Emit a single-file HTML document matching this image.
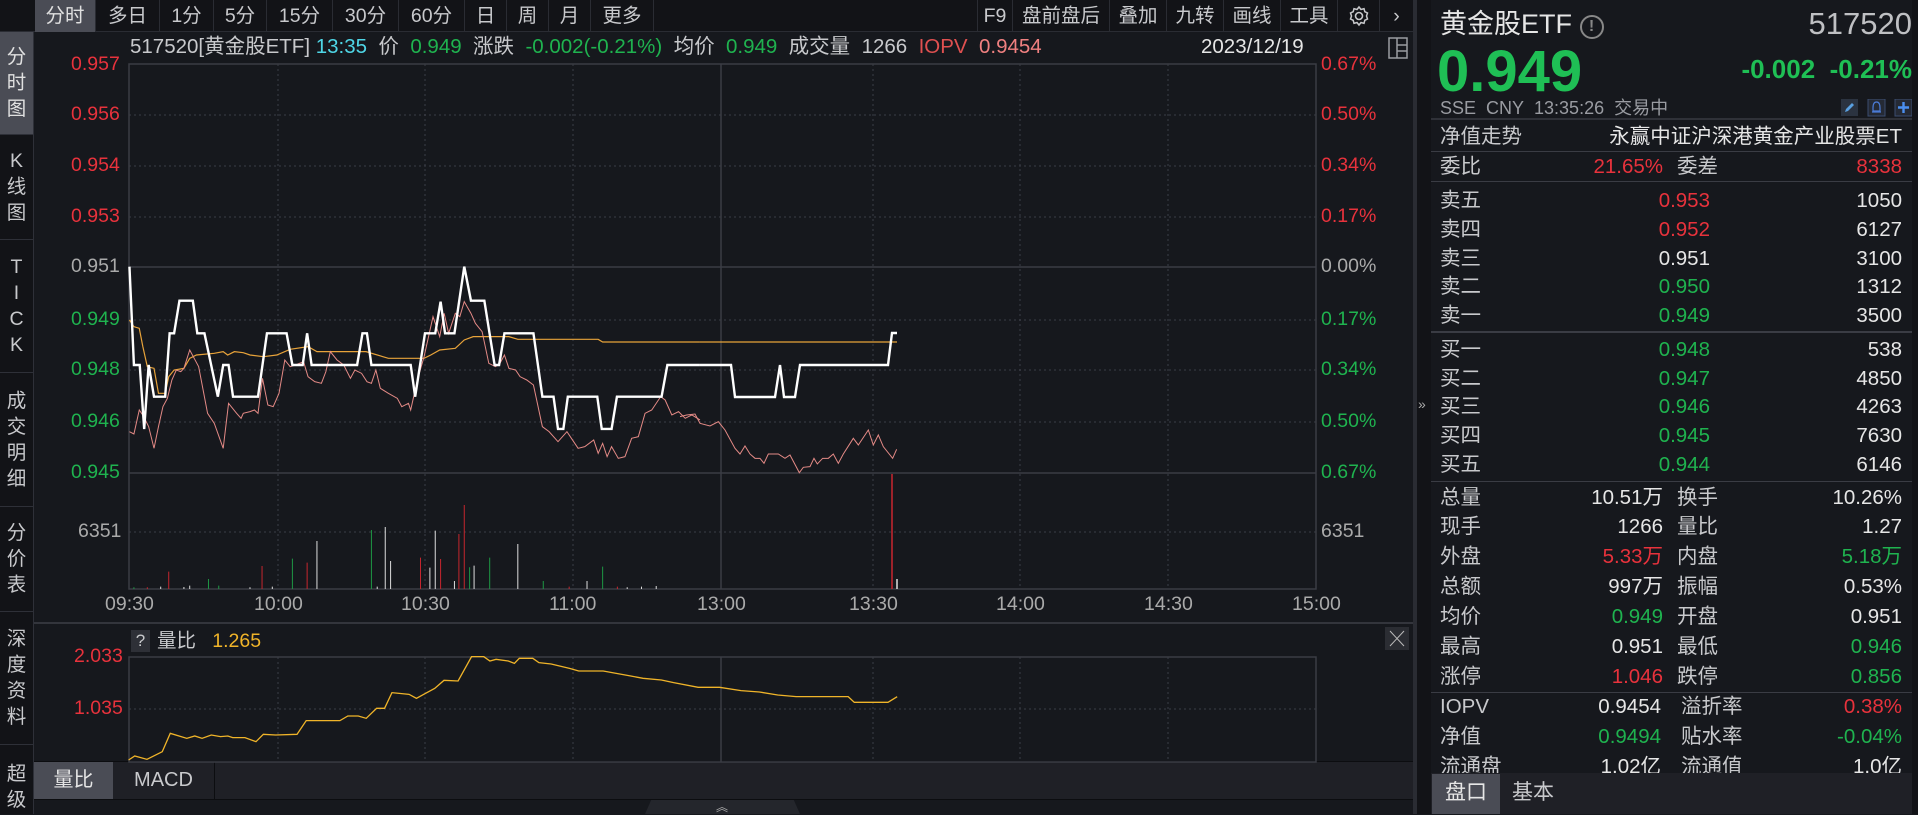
<!DOCTYPE html>
<html><head><meta charset="utf-8"><style>
*{margin:0;padding:0;box-sizing:border-box}
body{width:1918px;height:814px;background:#16181d;overflow:hidden;position:relative;font-family:"Liberation Sans","Noto Sans CJK SC",sans-serif;color:#c8c9cc}
.a{position:absolute;white-space:nowrap}
.ax{font-size:19.5px}
.tab{position:absolute;top:0;height:32px;line-height:32px;font-size:19.5px;text-align:center;color:#c8c9cc;border-right:1px solid #2a2c33}
.side{position:absolute;left:0;width:33px;font-size:19.5px;text-align:center;line-height:26px;color:#c8c9cc;border-bottom:1px solid #2e3038;display:flex;flex-direction:column;justify-content:center}
.r{color:#e8323c}.g{color:#1fb34f}.w{color:#e6e6e6}
.row{position:absolute;left:1440px;width:462px;height:29px;font-size:20.5px;line-height:29px}
.row span{position:absolute}
.hl{position:absolute;height:1px;background:#3a3c44}
</style></head><body>
<div class="a" style="left:0;top:0;width:1413px;height:32px;background:#121317;border-bottom:1px solid #2a2c33"></div>
<div class="tab" style="left:35px;width:61px;background:#4a4c55;color:#e0e0e0">分时</div>
<div class="tab" style="left:96px;width:64px">多日</div>
<div class="tab" style="left:160px;width:54px">1分</div>
<div class="tab" style="left:214px;width:53px">5分</div>
<div class="tab" style="left:267px;width:66px">15分</div>
<div class="tab" style="left:333px;width:66px">30分</div>
<div class="tab" style="left:399px;width:66px">60分</div>
<div class="tab" style="left:465px;width:42px">日</div>
<div class="tab" style="left:507px;width:42px">周</div>
<div class="tab" style="left:549px;width:42px">月</div>
<div class="tab" style="left:591px;width:63px">更多</div>
<div class="tab" style="left:977px;width:36px;border-left:1px solid #2a2c33">F9</div>
<div class="tab" style="left:1013px;width:97px">盘前盘后</div>
<div class="tab" style="left:1110px;width:57px">叠加</div>
<div class="tab" style="left:1167px;width:57px">九转</div>
<div class="tab" style="left:1224px;width:57px">画线</div>
<div class="tab" style="left:1281px;width:57px">工具</div>
<div class="tab" style="left:1338px;width:42px"><svg width="22" height="22" viewBox="0 0 22 22" style="margin-top:5px"><circle cx="11" cy="11" r="3.5" fill="none" stroke="#c8c9cc" stroke-width="1.6"/><path d="M11 2l2 2.5 3-.8.8 3 2.7 1.3-1 3 1 3-2.7 1.3-.8 3-3-.8L11 20l-2-2.5-3 .8-.8-3L2.5 14l1-3-1-3 2.7-1.3.8-3 3 .8z" fill="none" stroke="#c8c9cc" stroke-width="1.5"/></svg></div>
<div class="tab" style="left:1380px;width:33px;border:none">›</div>
<div class="a" style="left:0;top:32px;width:34px;height:782px;background:#121317;border-right:1px solid #2e3038"></div>
<div class="side" style="top:32px;height:103px;background:#4a4c55;color:#e0e0e0">分<br>时<br>图</div>
<div class="side" style="top:135px;height:105px">K<br>线<br>图</div>
<div class="side" style="top:240px;height:133px">T<br>I<br>C<br>K</div>
<div class="side" style="top:373px;height:134px">成<br>交<br>明<br>细</div>
<div class="side" style="top:507px;height:105px">分<br>价<br>表</div>
<div class="side" style="top:612px;height:133px">深<br>度<br>资<br>料</div>
<div class="side" style="top:745px;height:69px;justify-content:flex-start;padding-top:16px;border:none">超<br>级</div>
<div class="a" style="left:130px;top:35px;font-size:20.5px;line-height:24px">517520[黄金股ETF] <span style="color:#4fd6e6">13:35</span>&nbsp; 价&nbsp; <span class="g">0.949</span>&nbsp; 涨跌&nbsp; <span class="g">-0.002(-0.21%)</span>&nbsp; 均价&nbsp; <span class="g">0.949</span>&nbsp; 成交量&nbsp; 1266&nbsp; <span style="color:#e05050">IOPV</span>&nbsp; <span style="color:#f08080">0.9454</span></div>
<div class="a" style="left:1201px;top:35px;font-size:20.5px;line-height:24px;color:#e6e6e6">2023/12/19</div>
<svg class="a" style="left:1388px;top:37px" width="20" height="22"><rect x="1" y="1" width="18" height="20" fill="none" stroke="#9a9ca2" stroke-width="1.5"/><path d="M9 1v20M9 8h10M9 14h10" stroke="#9a9ca2" stroke-width="1.5"/></svg>
<div class="a r ax" style="left:71px;top:53px">0.957</div>
<div class="a r ax" style="left:71px;top:103px">0.956</div>
<div class="a r ax" style="left:71px;top:154px">0.954</div>
<div class="a r ax" style="left:71px;top:205px">0.953</div>
<div class="a ax" style="left:71px;top:255px;color:#aaa">0.951</div>
<div class="a g ax" style="left:71px;top:308px">0.949</div>
<div class="a g ax" style="left:71px;top:358px">0.948</div>
<div class="a g ax" style="left:71px;top:410px">0.946</div>
<div class="a g ax" style="left:71px;top:461px">0.945</div>
<div class="a ax" style="left:78px;top:520px;color:#aaa">6351</div>
<div class="a r ax" style="left:1321px;top:53px">0.67%</div>
<div class="a r ax" style="left:1321px;top:103px">0.50%</div>
<div class="a r ax" style="left:1321px;top:154px">0.34%</div>
<div class="a r ax" style="left:1321px;top:205px">0.17%</div>
<div class="a ax" style="left:1321px;top:255px;color:#aaa">0.00%</div>
<div class="a g ax" style="left:1321px;top:308px">0.17%</div>
<div class="a g ax" style="left:1321px;top:358px">0.34%</div>
<div class="a g ax" style="left:1321px;top:410px">0.50%</div>
<div class="a g ax" style="left:1321px;top:461px">0.67%</div>
<div class="a ax" style="left:1321px;top:520px;color:#aaa">6351</div>
<div class="a ax" style="left:105px;top:593px;color:#aaa">09:30</div>
<div class="a ax" style="left:254px;top:593px;color:#aaa">10:00</div>
<div class="a ax" style="left:401px;top:593px;color:#aaa">10:30</div>
<div class="a ax" style="left:549px;top:593px;color:#aaa">11:00</div>
<div class="a ax" style="left:697px;top:593px;color:#aaa">13:00</div>
<div class="a ax" style="left:849px;top:593px;color:#aaa">13:30</div>
<div class="a ax" style="left:996px;top:593px;color:#aaa">14:00</div>
<div class="a ax" style="left:1144px;top:593px;color:#aaa">14:30</div>
<div class="a ax" style="left:1292px;top:593px;color:#aaa">15:00</div>
<div class="a" style="left:34px;top:622px;width:1379px;height:2px;background:#33353c"></div>
<div class="a" style="left:131px;top:630px;width:19px;height:22px;background:#2e3037;font-size:17px;text-align:center;line-height:22px">?</div>
<div class="a" style="left:157px;top:629px;font-size:19.5px;line-height:24px">量比&nbsp;&nbsp; <span style="color:#f0b429">1.265</span></div>
<div class="a r ax" style="left:74px;top:645px">2.033</div>
<div class="a r ax" style="left:74px;top:697px">1.035</div>
<svg class="a" style="left:1385px;top:627px" width="24" height="23"><rect width="24" height="23" fill="#2b2d33"/><path d="M5 4l14 15M19 4L5 19" stroke="#bbb" stroke-width="1"/></svg>
<div class="a" style="left:34px;top:761px;width:1379px;height:39px;background:#1f2026;border-top:1px solid #0c0d10;border-bottom:1px solid #0c0d10"></div>
<div class="a" style="left:34px;top:762px;width:79px;height:37px;background:#4a4c55;color:#e6e6e6;font-size:20px;text-align:center;line-height:37px">量比</div>
<div class="a" style="left:113px;top:762px;width:102px;height:37px;font-size:20px;text-align:center;line-height:37px;border-right:1px solid #0c0d10">MACD</div>
<div class="a" style="left:645px;top:800px;width:155px;height:14px;background:#24262c;clip-path:polygon(4% 0,96% 0,100% 100%,0 100%)"></div>
<div class="a" style="left:716px;top:798px;font-size:12px;color:#aaa">︽</div>
<svg class="a" style="left:0;top:0" width="1413" height="814">
<g stroke="#3b3e46" stroke-width="1" stroke-dasharray="2,3">
<path d="M129 115H1316M129 166H1316M129 217H1316M129 320H1316M129 370H1316M129 422H1316M129 532H1316M129 709H1316"/>
<path d="M278 64V589M425 64V589M573 64V589M873 64V589M1020 64V589M1168 64V589M278 657V762M425 657V762M573 657V762M873 657V762M1020 657V762M1168 657V762"/>
</g>
<g stroke="#3a3c44" stroke-width="1.5" fill="none">
<rect x="129" y="64" width="1187" height="525"/>
<path d="M129 267H1316M129 473H1316M721 64V589"/>
<rect x="129" y="657" width="1187" height="105"/>
<path d="M721 657V762"/>
</g>
<g transform="translate(0,280) scale(0.4464,0.3333)" stroke-width="2.2" vector-effect="non-scaling-stroke">
<g stroke="#c8262e"><path d="M378 927V875M587 927V858M688 927V848M942 927V833M987 927V837M1028 927V762M1040 927V675M1383 927V920M330 927V922M1275 927V920"/></g>
<g stroke="#1e9a45"><path d="M467 927V897M655 927V836M832 927V750M1052 927V862M1097 927V833M1217 927V903M1350 927V860M300 927V922M490 927V917"/></g>
<g stroke="#e0e0e0"><path d="M710 927V783M863 927V741M875 927V843M963 927V863M975 927V752M1018 927V903M1062 927V857M1160 927V792M1315 927V903M425 927V917M610 927V920M1470 927V918M1437 927V920M1405 927V922M845 927V920M560 927V922M412 927V921M360 927V920"/></g>
</g>
<path d="M892 589V474" stroke="#c8262e" stroke-width="1.5"/>
<path d="M897 589V579" stroke="#e0e0e0" stroke-width="1.5"/>
<polyline transform="translate(0,280) scale(0.4464,0.3333)" vector-effect="non-scaling-stroke" fill="none" stroke="#e8a33a" stroke-width="1.2" points="290,120 300,140 312,145 320,200 330,260 345,265 355,340 370,340 378,290 390,270 412,265 425,235 440,225 480,220 500,215 510,225 525,215 545,218 560,225 590,230 620,225 650,208 690,200 710,215 820,215 870,235 950,235 965,225 985,210 1020,205 1040,180 1060,170 1140,170 1160,178 1340,178 1350,186 1568,186"/>
<path d="M700 342H897" stroke="#e8a33a" stroke-width="1.2"/>
<polyline transform="translate(0,280) scale(0.4464,0.3333)" vector-effect="non-scaling-stroke" fill="none" stroke="#e48a86" stroke-width="1" points="290,455 300,462 312,390 322,410 333,440 345,505 355,440 365,380 375,355 385,300 395,270 405,275 412,265 425,210 435,235 445,260 455,330 465,400 480,430 500,505 512,370 530,400 540,415 545,400 560,395 570,390 578,400 588,295 600,375 612,380 625,340 638,240 650,260 662,255 680,245 690,290 705,305 720,310 730,275 740,215 755,240 770,255 785,295 795,270 810,280 822,305 832,310 842,270 852,325 870,340 890,355 900,380 915,370 920,390 935,300 950,230 970,110 985,170 995,100 1005,160 1020,100 1030,110 1040,65 1055,100 1065,130 1080,155 1095,250 1110,260 1120,250 1130,225 1140,265 1155,270 1165,290 1180,300 1195,315 1215,440 1230,455 1250,485 1270,455 1280,475 1295,505 1310,500 1330,480 1340,520 1350,490 1360,530 1370,500 1385,535 1400,530 1415,475 1430,470 1445,400 1460,390 1480,350 1490,360 1505,405 1520,395 1535,415 1550,405 1568,420"/>
<polyline transform="translate(680,250) scale(0.3333)" vector-effect="non-scaling-stroke" fill="none" stroke="#e48a86" stroke-width="1" points="0,500 20,495 45,492 60,520 90,528 115,515 135,540 165,595 180,612 195,588 210,612 225,625 240,625 252,640 265,612 295,612 315,625 330,615 358,668 370,652 390,650 402,625 412,642 428,625 445,625 460,612 475,640 490,612 520,565 535,585 565,540 580,585 595,555 610,590 638,625 650,598"/>
<polyline transform="translate(0,280) scale(0.4464,0.3333)" vector-effect="non-scaling-stroke" fill="none" stroke="#ffffff" stroke-width="2.4" points="290,-40 300,255 313,255 323,447 333,255 345,350 370,350 380,160 390,160 402,62 432,62 442,160 458,160 488,350 500,255 512,255 522,350 578,350 598,160 642,160 655,255 678,255 688,160 698,255 800,255 812,160 822,160 832,255 920,255 930,350 952,160 975,160 987,65 997,160 1018,160 1040,-40 1055,62 1085,62 1108,255 1118,255 1130,160 1195,160 1215,350 1240,350 1250,447 1262,447 1272,350 1338,350 1348,447 1370,447 1382,350 1482,350 1495,255 1568,255"/>
<polyline fill="none" stroke="#ffffff" stroke-width="2.4" points="700,365 731,365 735,397 775,397 780,365 784,397 795,397 800,365 888,365 892,333 897,333"/>
<polyline transform="translate(0,600) scale(0.6124,0.3333)" vector-effect="non-scaling-stroke" fill="none" stroke="#f0b429" stroke-width="1.3" points="210,480 220,468 240,478 265,455 278,400 305,415 318,408 330,415 345,405 360,410 372,408 380,413 400,413 418,425 430,403 450,405 485,403 500,362 555,362 568,348 585,348 598,355 615,325 628,325 640,278 668,283 680,295 692,283 710,265 725,241 748,243 770,170 790,170 800,183 810,178 830,183 840,190 848,175 870,175 880,188 900,192 930,205 945,213 985,213 1030,228 1050,235 1080,240 1100,248 1140,262 1175,262 1210,272 1240,276 1270,285 1300,290 1385,290 1395,307 1450,307 1465,290"/>
</svg>
<div class="a" style="left:1413px;top:0;width:4px;height:814px;background:#2a2c33"></div>
<div class="a" style="left:1417px;top:0;width:14px;height:814px;background:#121317"></div>
<div class="a" style="left:1418px;top:396px;font-size:14px;color:#aaa">»</div>
<div class="a" style="left:1440px;top:7px;font-size:27px;line-height:34px;color:#e6e6e6">黄金股ETF <span style="display:inline-block;width:24px;height:24px;border:2px solid #888;border-radius:50%;font-size:16px;line-height:20px;text-align:center;color:#888;vertical-align:2px;font-weight:bold">!</span></div>
<div class="a" style="right:6px;top:5px;font-size:31px;line-height:38px;color:#bfc0c3">517520</div>
<div class="a g" style="left:1437px;top:41px;font-size:58px;font-weight:bold;line-height:62px;color:#1fbf55">0.949</div>
<div class="a g" style="right:6px;top:54px;font-size:26px;font-weight:bold;line-height:30px;color:#1fbf55">-0.002&nbsp; -0.21%</div>
<div class="a" style="left:1440px;top:98px;font-size:18px;line-height:20px;color:#9a9ca2">SSE&nbsp; CNY&nbsp; 13:35:26&nbsp; 交易中</div>
<svg class="a" style="left:1841px;top:99px" width="72" height="18"><rect width="17" height="17" fill="#2b3340"/><path d="M4 13l1-3 6-6 2 2-6 6z" fill="#5aa0e0"/><rect x="27" width="17" height="17" fill="#252a35" stroke="#3a4c70"/><path d="M31 13h9M35.5 3c-3 0-3.5 3-3.5 6v3h7V9c0-3-.5-6-3.5-6z" fill="none" stroke="#4b7bd6" stroke-width="1.2"/><rect x="54" width="17" height="17" fill="#252a35" stroke="#3a4c70"/><path d="M62.5 3v11M57 8.5h11" stroke="#4b8ff0" stroke-width="2.4"/></svg>
<div class="hl" style="left:1431px;top:118px;width:487px;height:2px;background:#2f3138"></div>
<div class="row" style="top:122px"><span style="left:0;color:#c8c9cc">净值走势</span><span style="right:0;color:#e6e6e6">永赢中证沪深港黄金产业股票ET</span></div>
<div class="hl" style="left:1431px;top:151px;width:481px"></div>
<div class="row" style="top:152px"><span style="left:0">委比</span><span class="r" style="right:239px">21.65%</span><span style="left:237px">委差</span><span class="r" style="right:0">8338</span></div>
<div class="hl" style="left:1431px;top:181px;width:481px"></div>
<div class="row" style="top:186px"><span style="left:0">卖五</span><span class="r" style="right:192px">0.953</span><span class="w" style="right:0">1050</span></div>
<div class="row" style="top:215px"><span style="left:0">卖四</span><span class="r" style="right:192px">0.952</span><span class="w" style="right:0">6127</span></div>
<div class="row" style="top:244px"><span style="left:0">卖三</span><span class="w" style="right:192px">0.951</span><span class="w" style="right:0">3100</span></div>
<div class="row" style="top:272px"><span style="left:0">卖二</span><span class="g" style="right:192px">0.950</span><span class="w" style="right:0">1312</span></div>
<div class="row" style="top:301px"><span style="left:0">卖一</span><span class="g" style="right:192px">0.949</span><span class="w" style="right:0">3500</span></div>
<div class="hl" style="left:1431px;top:331px;width:481px;height:2px"></div>
<div class="row" style="top:335px"><span style="left:0">买一</span><span class="g" style="right:192px">0.948</span><span class="w" style="right:0">538</span></div>
<div class="row" style="top:364px"><span style="left:0">买二</span><span class="g" style="right:192px">0.947</span><span class="w" style="right:0">4850</span></div>
<div class="row" style="top:392px"><span style="left:0">买三</span><span class="g" style="right:192px">0.946</span><span class="w" style="right:0">4263</span></div>
<div class="row" style="top:421px"><span style="left:0">买四</span><span class="g" style="right:192px">0.945</span><span class="w" style="right:0">7630</span></div>
<div class="row" style="top:450px"><span style="left:0">买五</span><span class="g" style="right:192px">0.944</span><span class="w" style="right:0">6146</span></div>
<div class="hl" style="left:1431px;top:481px;width:481px"></div>
<div class="row" style="top:483px"><span style="left:0">总量</span><span class="w" style="right:239px">10.51万</span><span style="left:237px">换手</span><span class="w" style="right:0">10.26%</span></div>
<div class="row" style="top:512px"><span style="left:0">现手</span><span class="w" style="right:239px">1266</span><span style="left:237px">量比</span><span class="w" style="right:0">1.27</span></div>
<div class="row" style="top:542px"><span style="left:0">外盘</span><span class="r" style="right:239px">5.33万</span><span style="left:237px">内盘</span><span class="g" style="right:0">5.18万</span></div>
<div class="row" style="top:572px"><span style="left:0">总额</span><span class="w" style="right:239px">997万</span><span style="left:237px">振幅</span><span class="w" style="right:0">0.53%</span></div>
<div class="row" style="top:602px"><span style="left:0">均价</span><span class="g" style="right:239px">0.949</span><span style="left:237px">开盘</span><span class="w" style="right:0">0.951</span></div>
<div class="row" style="top:632px"><span style="left:0">最高</span><span class="w" style="right:239px">0.951</span><span style="left:237px">最低</span><span class="g" style="right:0">0.946</span></div>
<div class="row" style="top:662px"><span style="left:0">涨停</span><span class="r" style="right:239px">1.046</span><span style="left:237px">跌停</span><span class="g" style="right:0">0.856</span></div>
<div class="hl" style="left:1431px;top:692px;width:481px"></div>
<div class="row" style="top:692px"><span style="left:0">IOPV</span><span class="w" style="right:241px">0.9454</span><span style="left:241px">溢折率</span><span class="r" style="right:0">0.38%</span></div>
<div class="row" style="top:722px"><span style="left:0">净值</span><span class="g" style="right:241px">0.9494</span><span style="left:241px">贴水率</span><span class="g" style="right:0">-0.04%</span></div>
<div class="row" style="top:752px;height:22px;overflow:hidden"><span style="left:0">流通盘</span><span class="w" style="right:241px">1.02亿</span><span style="left:241px">流通值</span><span class="w" style="right:0">1.0亿</span></div>
<div class="a" style="left:1431px;top:773px;width:481px;height:41px;background:#1f2026"></div>
<div class="a" style="left:1432px;top:774px;width:68px;height:40px;background:#4a4c55;color:#e6e6e6;font-size:21px;line-height:38px;text-align:center">盘口</div>
<div class="a" style="left:1512px;top:774px;font-size:21px;line-height:38px;color:#c8c9cc">基本</div>
<div class="a" style="left:1912px;top:0;width:6px;height:814px;background:#121317"></div>
</body></html>
